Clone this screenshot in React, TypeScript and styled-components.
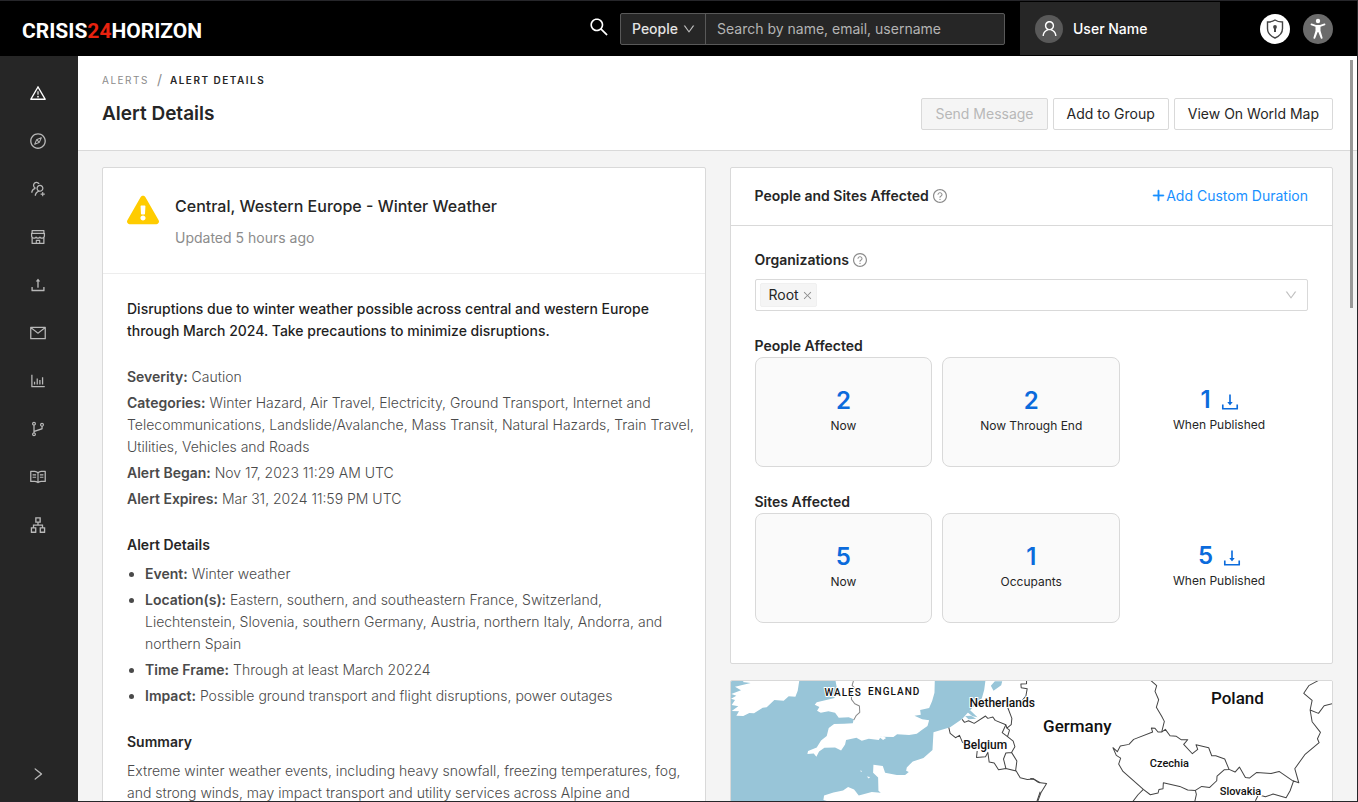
import React from 'react';
import styled, { createGlobalStyle } from 'styled-components';
import {
  AiOutlineApartment,
  AiOutlineBarChart,
  AiOutlineBranches,
  AiOutlineClose,
  AiOutlineCompass,
  AiOutlineDown,
  AiOutlineDownload,
  AiOutlineMail,
  AiOutlinePlus,
  AiOutlineQuestionCircle,
  AiOutlineRead,
  AiOutlineRight,
  AiOutlineSearch,
  AiOutlineShop,
  AiOutlineUpload,
  AiOutlineUser,
  AiOutlineUsergroupAdd,
  AiOutlineWarning,
} from 'react-icons/ai';
import { FaExclamationTriangle } from 'react-icons/fa';

const GlobalStyle = createGlobalStyle`
  *, *::before, *::after { box-sizing: border-box; }
  body {
    margin: 0;
    background: #f4f4f4;
    color: #262626;
    font: 400 14px/22px Inter, "Liberation Sans", sans-serif;
  }
  button, input, select { font: inherit; color: inherit; }
  button { cursor: pointer; }
  h1, h2, h3, p, ul { margin: 0; }
`;

const Shell = styled.div`
  display: flex;
  flex-direction: column;
  height: 100vh;
  border: solid #26262a;
  border-width: 1px 1px 1px 0;
`;

/* ---------- top bar ---------- */

const TopBar = styled.header`
  display: flex;
  align-items: center;
  flex: none;
  height: 55px;
  padding: 0 24px 0 22px;
  background: #000;
  color: #fff;
`;

const Logo = styled.a`
  margin-right: auto;
  padding-top: 4px;
  color: #fff;
  font: 700 21px/28px Roboto, sans-serif;
  text-decoration: none;
  span { color: #e8220f; }
`;

const SearchButton = styled.button`
  display: flex;
  margin-right: 10px;
  padding: 0 0 4px;
  border: 0;
  background: none;
  color: #fff;
`;

const SearchGroup = styled.form`
  display: flex;
  width: 385px;
  height: 32px;
  border: 1px solid #595959;
  border-radius: 2px;
  background: #262626;
`;

const ScopePicker = styled.div`
  position: relative;
  width: 85px;
  border-right: 1px solid #595959;
  select {
    width: 100%;
    height: 100%;
    padding: 0 0 0 11px;
    border: 0;
    background: none;
    color: #e3e3e3;
    font-weight: 500;
    appearance: none;
  }
  svg {
    position: absolute;
    top: 8px;
    right: 9px;
    color: #bfbfbf;
    pointer-events: none;
  }
`;

const SearchInput = styled.input`
  flex: 1;
  min-width: 0;
  padding: 0 11px;
  border: 0;
  background: none;
  &::placeholder { color: #b4b4b4; opacity: 1; }
`;

const UserBox = styled.button`
  display: flex;
  align-items: center;
  gap: 10px;
  width: 200px;
  height: 53px;
  margin: 0 40px 0 15px;
  padding: 0 15px;
  border: 0;
  background: #262626;
  color: #fff;
  font-weight: 500;
`;

const Avatar = styled.span`
  display: grid;
  place-items: center;
  width: 28px;
  height: 28px;
  border-radius: 50%;
  background: #595959;
`;

const RoundButton = styled.button<{ $light?: boolean }>`
  display: grid;
  place-items: center;
  width: 30px;
  height: 30px;
  padding: 0;
  border: 0;
  border-radius: 50%;
  background: ${(p) => (p.$light ? '#fff' : '#6b6b6b')};
  & + & { margin-left: 13px; }
`;

/* ---------- side bar ---------- */

const Body = styled.div`
  display: flex;
  flex: 1;
  min-height: 0;
`;

const SideBar = styled.nav`
  display: flex;
  flex-direction: column;
  flex: none;
  width: 78px;
  padding: 13px 2px 3px 0;
  background: #262626;
`;

const NavItem = styled.a<{ $active?: boolean }>`
  display: grid;
  place-items: center;
  height: 48px;
  color: ${(p) => (p.$active ? '#fff' : '#b8b8b8')};
`;

const Collapse = styled.button`
  display: grid;
  place-items: center;
  height: 48px;
  margin-top: auto;
  border: 0;
  background: none;
  color: #b8b8b8;
`;

/* ---------- page ---------- */

const Stage = styled.div`
  position: relative;
  flex: 1;
  min-width: 0;
`;

const Scroller = styled.main`
  height: 100%;
  overflow-y: auto;
  scrollbar-width: none;
`;

const ScrollThumb = styled.div`
  position: absolute;
  top: 4px;
  right: 4px;
  width: 3px;
  height: 248px;
  background: #999;
`;

const PageHeader = styled.div`
  padding: 14px 24px 20px;
  border-bottom: 1px solid #d9d9d9;
  background: #fff;
`;

const Crumbs = styled.nav`
  display: flex;
  align-items: center;
  gap: 8px;
  height: 20px;
  color: #8c8c8c;
  font-size: 10px;
  letter-spacing: 1.5px;
  a { color: inherit; text-decoration: none; }
  i { font-size: 14px; font-style: normal; letter-spacing: 0; }
  strong { color: #262626; font-weight: 600; }
`;

const TitleRow = styled.div`
  display: flex;
  align-items: center;
  justify-content: space-between;
  margin-top: 8px;
  h1 { font-size: 19px; line-height: 32px; font-weight: 600; }
`;

const Actions = styled.div`
  display: flex;
  gap: 5px;
`;

const Action = styled.button`
  height: 32px;
  padding: 0 13px;
  border: 1px solid #d9d9d9;
  border-radius: 2px;
  background: #fff;
  &:disabled { background: #f5f5f5; color: #b8b8b8; }
`;

const Columns = styled.div`
  display: grid;
  grid-template-columns: 1fr 1fr;
  gap: 24px;
  align-items: start;
  padding: 16px 24px;
`;

const RightColumn = styled.div`
  display: grid;
  gap: 16px;
  min-width: 0;
`;

const Card = styled.section`
  border: 1px solid #d9d9d9;
  border-radius: 2px;
  background: #fff;
  overflow: hidden;
`;

const AlertHead = styled.div`
  display: flex;
  gap: 16px;
  padding: 27px 24px 24px;
  border-bottom: 1px solid #ededed;
  svg { margin-top: -1px; color: #ffcc00; }
  h2 { font-size: 16px; line-height: 22px; font-weight: 500; }
  p { margin-top: 10px; color: #8c8c8c; }
`;

const AlertBody = styled.div`
  padding: 24px 8px 24px 24px;
  color: #4a4a4a;
  font-weight: 300;
  strong { font-weight: 600; }
`;

const Lead = styled.p`
  color: #1f1f1f;
  font-weight: 500;
`;

const Facts = styled.div`
  display: grid;
  gap: 4px;
  margin-top: 24px;
`;

const SectionTitle = styled.h3`
  margin: 24px 0 7px;
  color: #262626;
  font-size: 14px;
  line-height: 22px;
  font-weight: 600;
`;

const Bullets = styled.ul`
  display: grid;
  gap: 4px;
  padding-left: 18px;
`;

const PanelHead = styled.div`
  display: flex;
  align-items: center;
  justify-content: space-between;
  height: 58px;
  padding: 0 24px 2px;
  border-bottom: 1px solid #d9d9d9;
`;

const Heading = styled.h2`
  display: flex;
  align-items: center;
  gap: 3px;
  font-size: 14px;
  line-height: 22px;
  font-weight: 600;
  svg { color: #8c8c8c; }
`;

const LinkButton = styled.button`
  display: flex;
  align-items: center;
  padding: 0;
  border: 0;
  background: none;
  color: #1890ff;
`;

const PanelBody = styled.div`
  padding: 23px 24px 40px;
`;

const Picker = styled.div`
  display: flex;
  align-items: center;
  height: 32px;
  margin: 8px 0 24px;
  padding: 0 9px 0 4px;
  border: 1px solid #d9d9d9;
  border-radius: 2px;
  color: #bfbfbf;
  input {
    flex: 1;
    min-width: 0;
    border: 0;
    outline: 0;
    background: none;
  }
`;

const Tag = styled.span`
  display: flex;
  align-items: center;
  gap: 3px;
  height: 24px;
  padding: 0 3px 0 8px;
  border: 1px solid #f0f0f0;
  border-radius: 2px;
  background: #f5f5f5;
  color: #262626;
  button {
    display: flex;
    padding: 0;
    border: 0;
    background: none;
    color: #8c8c8c;
  }
`;

const Tiles = styled.div`
  display: grid;
  grid-template-columns: repeat(3, 1fr);
  gap: 10px;
  & + h2 { margin-top: 24px; }
`;

const Tile = styled.button<{ $plain?: boolean }>`
  display: flex;
  flex-direction: column;
  align-items: center;
  height: 110px;
  padding: 27px 0 0;
  border: ${(p) => (p.$plain ? '0' : '1px solid #d9d9d9')};
  border-radius: 8px;
  background: ${(p) => (p.$plain ? 'none' : '#fafafa')};
  font-size: 12px;
  line-height: 18px;
`;

const Count = styled.span`
  display: flex;
  align-items: center;
  gap: 8px;
  color: #0b6bdc;
  font-size: 24px;
  line-height: 32px;
  font-weight: 600;
  svg { margin: 3px -3px 0 0; }
`;

const MapSvg = styled.svg`
  display: block;
  width: 100%;
  height: 320px;
  text {
    fill: #111;
    stroke: #fff;
    stroke-width: 2px;
    paint-order: stroke;
    font-family: Roboto, sans-serif;
    font-weight: 500;
    text-anchor: middle;
  }
`;

const navItems = [
  { label: 'Alerts', Icon: AiOutlineWarning },
  { label: 'Explore', Icon: AiOutlineCompass },
  { label: 'People', Icon: AiOutlineUsergroupAdd },
  { label: 'Sites', Icon: AiOutlineShop },
  { label: 'Uploads', Icon: AiOutlineUpload },
  { label: 'Messages', Icon: AiOutlineMail },
  { label: 'Reports', Icon: AiOutlineBarChart },
  { label: 'Workflows', Icon: AiOutlineBranches },
  { label: 'Library', Icon: AiOutlineRead },
  { label: 'Organization', Icon: AiOutlineApartment },
];

const facts = [
  ['Severity', 'Caution'],
  [
    'Categories',
    'Winter Hazard, Air Travel, Electricity, Ground Transport, Internet and Telecommunications, Landslide/Avalanche, Mass Transit, Natural Hazards, Train Travel, Utilities, Vehicles and Roads',
  ],
  ['Alert Began', 'Nov 17, 2023 11:29 AM UTC'],
  ['Alert Expires', 'Mar 31, 2024 11:59 PM UTC'],
];

const details = [
  ['Event', 'Winter weather'],
  [
    'Location(s)',
    'Eastern, southern, and southeastern France, Switzerland, Liechtenstein, Slovenia, southern Germany, Austria, northern Italy, Andorra, and northern Spain',
  ],
  ['Time Frame', 'Through at least March 20224'],
  ['Impact', 'Possible ground transport and flight disruptions, power outages'],
];

const groups = [
  { title: 'People Affected', tiles: [['2', 'Now'], ['2', 'Now Through End'], ['1', 'When Published']] },
  { title: 'Sites Affected', tiles: [['5', 'Now'], ['1', 'Occupants'], ['5', 'When Published']] },
];

function ShieldIcon() {
  return (
    <svg width="18" height="20" viewBox="0 0 18 20" fill="none" stroke="#444" strokeWidth="1.4" aria-hidden="true">
      <path d="M9 1C7 2.500 4.500 3 1.500 3v6.500c0 4.500 3.500 7.800 7.500 9.500 4-1.700 7.500-5 7.500-9.500V3C13.500 3 11 2.500 9 1Z" />
      <circle cx="9" cy="8" r="1.900" fill="#444" stroke="none" />
      <path d="M9 8v5" strokeWidth="2" />
    </svg>
  );
}

function AccessIcon() {
  return (
    <svg width="18" height="22" viewBox="0 0 18 22" aria-hidden="true">
      <circle cx="9" cy="3" r="2.200" fill="#fff" />
      <path
        d="M2.700 5.600 7 6.900h4l4.300-1.300c1.200-.300 1.600 1.200.500 1.600L11.500 8.800v4l2 6.800c.300 1.300-1.200 1.700-1.700.600L9.300 14h-.600l-2.500 6.200c-.500 1.100-2 .700-1.700-.600l2-6.800v-4L2.200 7.200c-1.100-.400-.700-1.900.500-1.600Z"
        fill="#fff"
      />
    </svg>
  );
}

function WorldMap() {
  return (
    <MapSvg viewBox="0 0 601 320" preserveAspectRatio="xMinYMin slice" role="img" aria-label="Map of the affected area">
      <rect width="601" height="320" fill="#fff" />
      <g transform="translate(-11 -11) scale(.3333)">
        <path fill="#98c5d8" d="M30 30H796L792 60 785 85 768 102 750 120 726 147 690 172 640 187 637 240 610 264 578 274 560 292 558 302 566 306 555 315 530 315 495 308 488 288 460 284 459 308 474 322 475 362 482 368 455 366 416 376 402 358 384 351 369 361 340 367 312 376 310 390 340 398 340 1000H30Z" />
        <path fill="#fff" d="M346 30 351 58 340 75 344 84 290 97 284 104 298 111 291 122 302 128 325 124 345 128 356 143 386 142 401 148 398 160 372 161 342 162 326 174 320 198 303 211 290 232 264 243 262 252 281 250 289 260 297 244 313 233 345 232 363 241 375 223 378 210 409 203 425 212 446 206 476 210 482 200 520 201 531 193 567 195 590 191 606 179 622 168 627 151 606 148 583 137 602 134 600 120 627 114 636 93 643 68 644 30Z" />
        <path fill="#fff" d="M238 30 233 62 226 80 206 79 191 92 163 90 140 112 128 113 102 130 88 129 70 138 49 137 57 124 35 123 55 109 35 105 45 90 33 86 49 77 34 72 63 61 45 50 92 39 68 36 75 30Z" />
        <path fill="#fff" d="M478 202 488 198 498 204 489 210ZM420 301l6 2-3 3ZM440 319l10 2-4 4Z" />
        <path fill="#98c5d8" d="M812 47 824 34 846 34 843 46 820 62ZM737 123 750 121 772 142 757 139ZM735 138 752 137 768 146 745 148Z" />
        <g fill="none" stroke="#444" strokeWidth="3" strokeLinejoin="round">
          <path stroke="#888" d="M400 33 396 46 402 52 394 68 394 88 404 101 418 108 419 127 408 137 401 150" />
          <path d="M686 173 690 190 706 203 718 196 727 217 738 222M771 243 769 262 796 260 803 247 807 276 822 279 835 299 857 295 888 303 900 323 921 328 941 327 960 338" />
          <path d="M726 148 733 157 745 152 762 160 796 138 803 145 818 141 825 151 857 164 860 174 873 164 875 145 862 111" />
          <path d="M857 164 846 188 862 200 868 180 860 174M862 200 879 213 884 230 874 247 857 249 850 267 857 295M874 247 890 273 886 303M919 33 919 41 902 42 903 53 921 56 917 78 907 90M960 365 950 394" />
        </g>
      </g>
      <g transform="translate(299 -21) scale(.3333)" fill="none" stroke="#444" strokeWidth="3" strokeLinejoin="round">
        <path d="M362 62 379 77 374 94 385 119 378 142 394 169 402 184 394 216 383 216 374 205 363 204 367 216 310 238 296 253 270 258 261 275 248 263 258 286 271 294 265 312 278 334 339 388 360 404 383 399 386 388 398 386 399 368 448 379 472 390 495 391 514 379 538 382 559 362 560 348 582 329 596 328 583 297 556 287 544 287 535 263 497 254 502 268 486 281 460 253 472 239 452 239 438 229 419 227 405 208 394 216" />
        <path d="M596 328 614 336 627 321 645 352 657 354 679 337 722 340 746 334 785 361 805 368 793 326 823 284 866 248 861 236 870 217 845 185 839 150 845 121 820 100 835 77 863 62M839 150 864 160 881 137 910 130M790 361 779 392 767 413 728 402 705 410 684 404 675 422M495 391 498 403 492 430M339 388 323 404 307 425M0 355 9 356 24 367 49 370 32 398 22 425" />
      </g>
      <text x="112" y="15" fontSize="10" letterSpacing="1">WALES</text>
      <text x="163" y="14" fontSize="10" letterSpacing="1">ENGLAND</text>
      <text x="271" y="26" fontSize="12">Netherlands</text>
      <text x="254" y="68" fontSize="12">Belgium</text>
      <text x="346" y="51" fontSize="17">Germany</text>
      <text x="506" y="23" fontSize="17">Poland</text>
      <text x="438" y="86" fontSize="11">Czechia</text>
      <text x="509" y="114" fontSize="11">Slovakia</text>
    </MapSvg>
  );
}

export default function App() {
  return (
    <Shell>
      <GlobalStyle />
      <TopBar>
        <Logo href="#">CRISIS<span>24</span>HORIZON</Logo>
        <SearchButton type="submit" form="people-search" aria-label="Search">
          <AiOutlineSearch size={22} />
        </SearchButton>
        <SearchGroup id="people-search">
          <ScopePicker>
            <select aria-label="Search in" defaultValue="People">
              <option>People</option>
              <option>Sites</option>
            </select>
            <AiOutlineDown size={14} />
          </ScopePicker>
          <SearchInput aria-label="Search people" placeholder="Search by name, email, username" />
        </SearchGroup>
        <UserBox>
          <Avatar><AiOutlineUser size={19} /></Avatar>
          User Name
        </UserBox>
        <RoundButton $light aria-label="Privacy"><ShieldIcon /></RoundButton>
        <RoundButton aria-label="Accessibility"><AccessIcon /></RoundButton>
      </TopBar>
      <Body>
        <SideBar aria-label="Main">
          {navItems.map(({ label, Icon }, i) => (
            <NavItem key={label} href="#" aria-label={label} $active={i === 0}>
              <Icon size={18} />
            </NavItem>
          ))}
          <Collapse aria-label="Expand menu"><AiOutlineRight size={16} /></Collapse>
        </SideBar>
        <Stage>
          <Scroller>
            <PageHeader>
              <Crumbs aria-label="Breadcrumb">
                <a href="#">ALERTS</a>
                <i>/</i>
                <strong>ALERT DETAILS</strong>
              </Crumbs>
              <TitleRow>
                <h1>Alert Details</h1>
                <Actions>
                  <Action disabled>Send Message</Action>
                  <Action>Add to Group</Action>
                  <Action>View On World Map</Action>
                </Actions>
              </TitleRow>
            </PageHeader>
            <Columns>
              <Card>
                <AlertHead>
                  <FaExclamationTriangle size={32} />
                  <div>
                    <h2>Central, Western Europe - Winter Weather</h2>
                    <p>Updated 5 hours ago</p>
                  </div>
                </AlertHead>
                <AlertBody>
                  <Lead>
                    Disruptions due to winter weather possible across central and western Europe through March 2024. Take
                    precautions to minimize disruptions.
                  </Lead>
                  <Facts>
                    {facts.map(([name, value]) => (
                      <p key={name}><strong>{name}:</strong> {value}</p>
                    ))}
                  </Facts>
                  <SectionTitle>Alert Details</SectionTitle>
                  <Bullets>
                    {details.map(([name, value]) => (
                      <li key={name}><strong>{name}:</strong> {value}</li>
                    ))}
                  </Bullets>
                  <SectionTitle>Summary</SectionTitle>
                  <p>
                    Extreme winter weather events, including heavy snowfall, freezing temperatures, fog, and strong winds,
                    may impact transport and utility services across Alpine and
                  </p>
                </AlertBody>
              </Card>
              <RightColumn>
                <Card>
                  <PanelHead>
                    <Heading>People and Sites Affected <AiOutlineQuestionCircle size={16} /></Heading>
                    <LinkButton><AiOutlinePlus size={15} stroke="currentColor" strokeWidth={50} />Add Custom Duration</LinkButton>
                  </PanelHead>
                  <PanelBody>
                    <Heading as="label" htmlFor="organizations">
                      Organizations <AiOutlineQuestionCircle size={16} />
                    </Heading>
                    <Picker>
                      <Tag>
                        Root
                        <button aria-label="Remove Root"><AiOutlineClose size={11} /></button>
                      </Tag>
                      <input id="organizations" />
                      <AiOutlineDown size={14} />
                    </Picker>
                    {groups.map(({ title, tiles }) => (
                      <React.Fragment key={title}>
                        <Heading>{title}</Heading>
                        <Tiles>
                          {tiles.map(([count, label], i) => (
                            <Tile key={label} $plain={i === 2}>
                              <Count>
                                {count}
                                {i === 2 && <AiOutlineDownload size={22} />}
                              </Count>
                              {label}
                            </Tile>
                          ))}
                        </Tiles>
                      </React.Fragment>
                    ))}
                  </PanelBody>
                </Card>
                <Card><WorldMap /></Card>
              </RightColumn>
            </Columns>
          </Scroller>
          <ScrollThumb />
        </Stage>
      </Body>
    </Shell>
  );
}
